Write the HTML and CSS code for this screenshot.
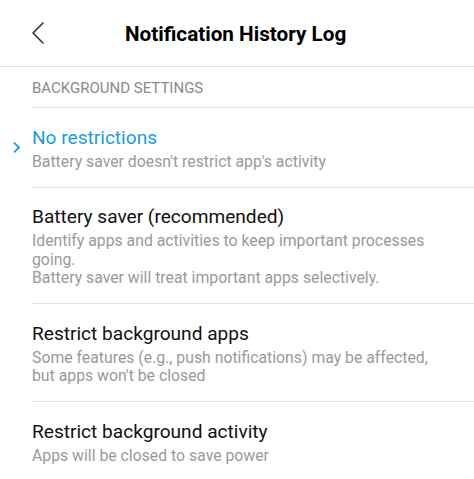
FILE: index.html
```html
<!DOCTYPE html>
<html lang="en">
<head>
<meta charset="utf-8">
<title>Notification History Log</title>
<link rel="stylesheet" href="styles.css">
</head>
<body>
<header class="topbar">
  <button class="back" aria-label="Back">
    <svg width="14" height="22" viewBox="0 0 14 22"><path d="M12 1 L2 11 L12 21" fill="none" stroke="#333" stroke-width="1.6" stroke-linecap="round" stroke-linejoin="round"/></svg>
  </button>
  <h1 class="title">Notification History Log</h1>
</header>
<main class="list">
  <div class="section">BACKGROUND SETTINGS</div>
  <div class="item selected">
    <svg class="mark" width="8" height="11" viewBox="0 0 8 11"><path d="M1.5 1.2 L6 5.5 L1.5 9.8" fill="none" stroke="#1e9be2" stroke-width="1.8" stroke-linecap="round" stroke-linejoin="round"/></svg>
    <div class="item-title">No restrictions</div>
    <div class="item-desc">Battery saver doesn't restrict app's activity</div>
  </div>
  <div class="item">
    <div class="item-title">Battery saver (recommended)</div>
    <div class="item-desc">Identify apps and activities to keep important processes going.<br>Battery saver will treat important apps selectively.</div>
  </div>
  <div class="item">
    <div class="item-title">Restrict background apps</div>
    <div class="item-desc">Some features (e.g., push notifications) may be affected, but apps won't be closed</div>
  </div>
  <div class="item last">
    <div class="item-title">Restrict background activity</div>
    <div class="item-desc">Apps will be closed to save power</div>
  </div>
</main>
</body>
</html>
```
FILE: styles.css
```css
* { box-sizing: border-box; }

html, body {
  margin: 0;
  padding: 0;
  background: #ffffff;
  font-family: Roboto, "Noto Sans", sans-serif;
}

.topbar {
  height: 67px;
  border-bottom: 1px solid #e2e2e2;
  display: flex;
  align-items: center;
}

.back {
  background: none;
  border: 0;
  padding: 0;
  margin-left: 31px;
  width: 14px;
  height: 22px;
  display: flex;
  margin-top: 0;
}

.title {
  margin: 2px 0 0 80px;
  font-size: 20.7px;
  font-weight: 700;
  color: #000;
}

.list {
  padding-left: 32px;
}

.section {
  height: 41px;
  display: flex;
  align-items: center;
  font-size: 15px;
  color: #8a8a8a;
  border-bottom: 1px solid #e2e2e2;
  padding-top: 2px;
}

.item {
  position: relative;
  padding: 17.5px 0 15.5px;
  border-bottom: 1px solid #e2e2e2;
}

.item.last { border-bottom: 0; }

.mark {
  position: absolute;
  left: -19px;
  top: 34px;
}

.item-title {
  font-size: 19.1px;
  line-height: 24px;
  color: #111;
}

.selected .item-title { color: #1e9be2; }

.item-desc {
  margin-top: 3px;
  font-size: 15.8px;
  line-height: 18.5px;
  color: #9a9a9a;
  padding-right: 28px;
}
```
